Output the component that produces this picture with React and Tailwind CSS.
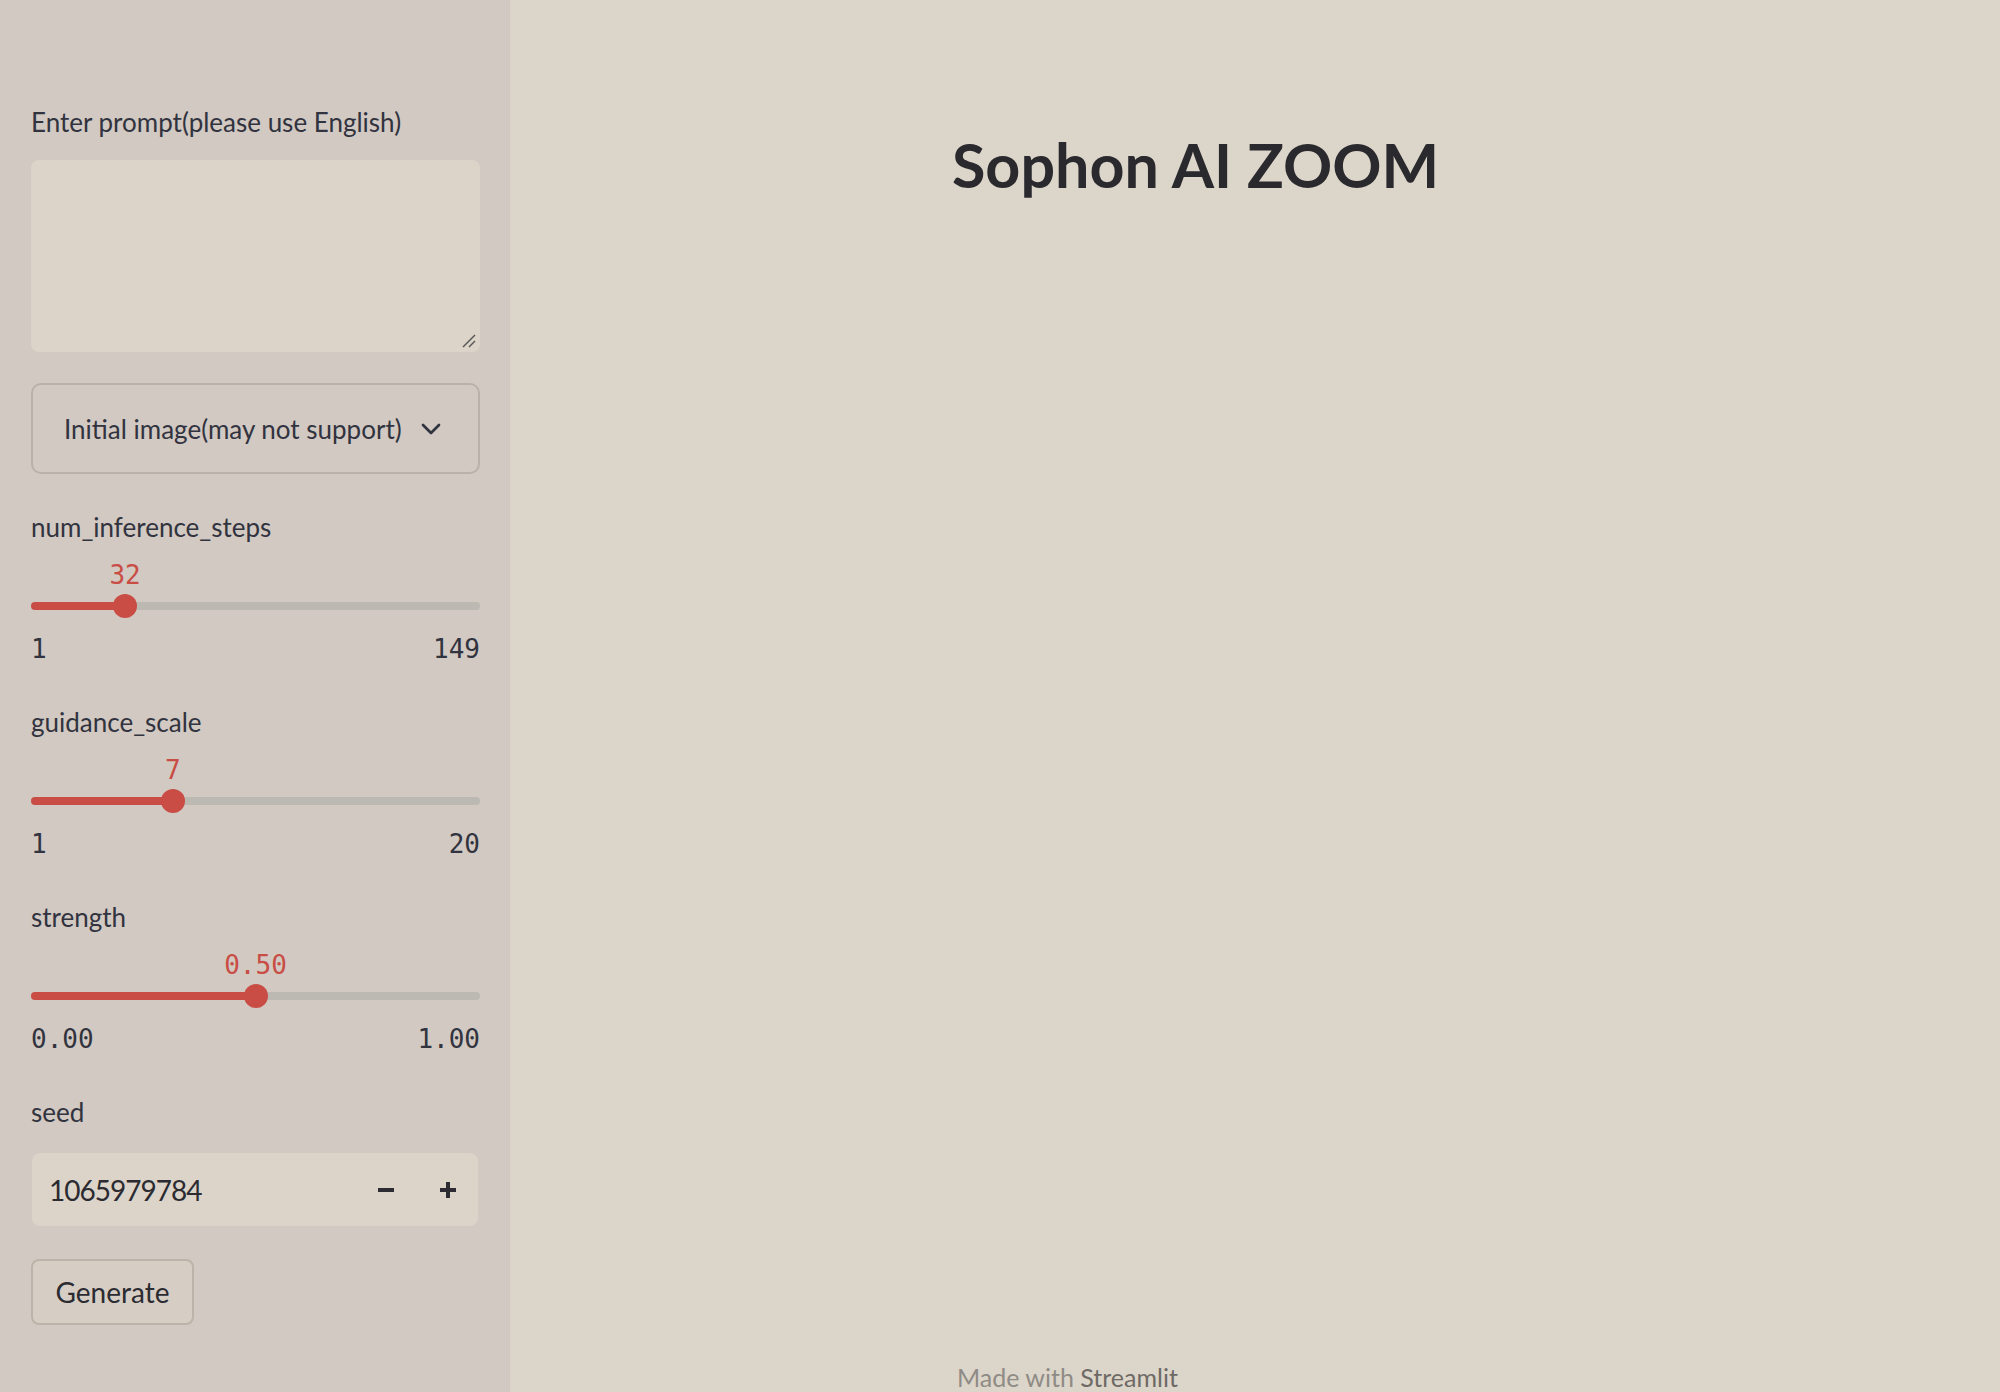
import React from "react";
import { ChevronDown } from "lucide-react";

const sliders = [
  { label: "num_inference_steps", min: 1, max: 149, value: 32, fmt: (v) => String(v) },
  { label: "guidance_scale", min: 1, max: 20, value: 7, fmt: (v) => String(v) },
  { label: "strength", min: 0, max: 1, value: 0.5, fmt: (v) => v.toFixed(2) },
];

const Slider = ({ label, min, max, value, fmt }) => {
  const pct = ((value - min) / (max - min)) * 100;
  return (
    <div className="mb-[41px]">
      <div className="h-[36px] text-[26px] leading-[36px] text-[#31333f]">{label}</div>
      {/* value + track */}
      <div className="relative mt-[16px] h-[28px]">
        <span
          className="absolute top-0 -translate-x-1/2 font-['DejaVu_Sans_Mono',monospace] text-[26px] leading-[28px] text-[#c94d45]"
          style={{ left: `${pct}%` }}
        >
          {fmt(value)}
        </span>
      </div>
      <div className="relative mt-[5px] h-[24px]">
        <div className="absolute left-0 right-0 top-[8px] h-[8px] rounded-full bg-[#bcb8b2]" />
        <div
          className="absolute left-0 top-[8px] h-[8px] rounded-full bg-[#c94d45]"
          style={{ width: `${pct}%` }}
        />
        <div
          className="absolute top-0 h-[24px] w-[24px] -translate-x-1/2 rounded-full bg-[#c94d45]"
          style={{ left: `${pct}%` }}
        />
      </div>
      <div className="mt-[17px] flex h-[28px] justify-between font-['DejaVu_Sans_Mono',monospace] text-[26px] leading-[28px] text-[#31333f]">
        <span>{fmt(min)}</span>
        <span>{fmt(max)}</span>
      </div>
    </div>
  );
};

const App = () => {
  return (
    <div className="flex h-[1392px] w-[2000px] overflow-hidden font-['Lato',sans-serif] text-[#31333f]">
      {/* Sidebar */}
      <aside className="w-[510px] shrink-0 bg-[#d1c9c2] pl-[31px] pr-[30px] pt-[104px]">
        <div className="h-[36px] text-[26px] leading-[36px]">Enter prompt(please use English)</div>
        <div className="relative mt-[20px] h-[192px] rounded-[8px] bg-[#dcd4c9]">
          <svg className="absolute bottom-[4px] right-[4px]" width="14" height="14" viewBox="0 0 14 14">
            <line x1="1" y1="13" x2="13" y2="1" stroke="#555" strokeWidth="1.5" />
            <line x1="7" y1="13" x2="13" y2="7" stroke="#555" strokeWidth="1.5" />
          </svg>
        </div>
        <div className="mt-[31px] flex h-[91px] items-center rounded-[10px] border-2 border-[#b9b2ab] pl-[31px]">
          <span className="whitespace-nowrap text-[26px] leading-[36px]">Initial image(may not support)</span>
          <ChevronDown className="ml-[13px] shrink-0 text-[#31333f]" size={32} strokeWidth={2} />
        </div>

        <div className="mt-[35px]">
          {sliders.map((s) => (
            <Slider key={s.label} {...s} />
          ))}
        </div>

        <div className="h-[36px] text-[26px] leading-[36px]">seed</div>
        <div className="mt-[23px] ml-[1px] mr-[2px] flex h-[73px] items-center rounded-[8px] bg-[#dcd4c9] pl-[17px]">
          <span className="flex-1 text-[28px] leading-[36px] tracking-[-1px] text-[#2b2b31]">1065979784</span>
          <div className="mr-[14px] flex h-full w-[48px] items-center justify-center">
            <div className="h-[4px] w-[16px] bg-[#2b2b31]" />
          </div>
          <div className="mr-[6px] flex h-full w-[48px] items-center justify-center">
            <div className="relative h-[16px] w-[16px]">
              <div className="absolute left-0 top-[6px] h-[4px] w-[16px] bg-[#2b2b31]" />
              <div className="absolute left-[6px] top-0 h-[16px] w-[4px] bg-[#2b2b31]" />
            </div>
          </div>
        </div>
        <button className="mt-[33px] flex h-[66px] w-[163px] items-center justify-center rounded-[8px] border-2 border-[#bdb3a9] bg-[#d6cec5] text-[28px] text-[#2b2b31]">
          Generate
        </button>
      </aside>

      {/* Main */}
      <main className="relative flex flex-1 flex-col bg-[#dcd5c9] pl-[442px]">
        <h1 className="mt-[127px] text-[61px] font-bold leading-[76px] text-[#2a292e]">Sophon AI ZOOM</h1>
        <div className="mt-auto mb-[-1px] pl-[5px] text-[25px] leading-[32px] text-[#8f8b86]">
          Made with <span className="text-[#6e6a66]">Streamlit</span>
        </div>
      </main>
    </div>
  );
};

export default App;
